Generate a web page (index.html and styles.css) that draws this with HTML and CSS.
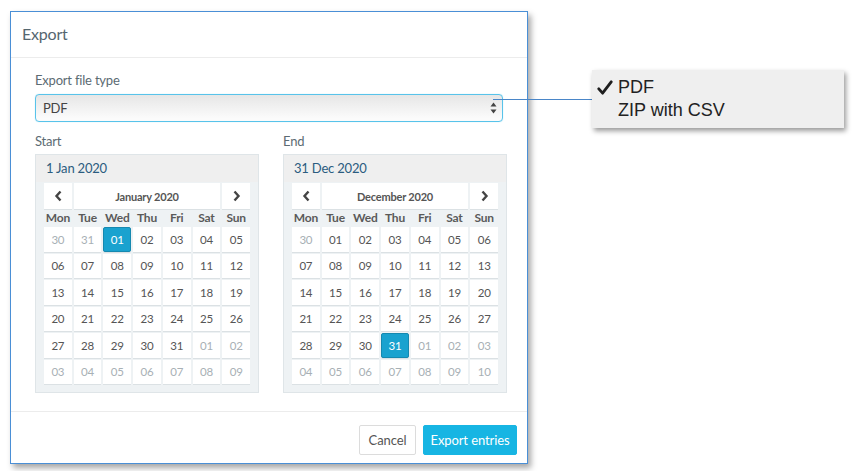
FILE: index.html
```html
<!DOCTYPE html>
<html>
<head>
<meta charset="utf-8">
<link rel="stylesheet" href="styles.css">
</head>
<body>
<div class="modal">
  <div class="modal-header">Export</div>
  <div class="modal-body">
    <div class="label">Export file type</div>
    <div class="select">
      <span>PDF</span>
      <svg class="arrows" width="7" height="12" viewBox="0 0 7 12"><path d="M3.5 0.5 L6.5 4.5 L0.5 4.5 Z M3.5 11.5 L6.5 7.5 L0.5 7.5 Z" fill="#444"/></svg>
    </div>
    <div class="cals">
      <div class="col">
        <div class="label lbl2">Start</div>
        <div class="cal">
          <div class="cal-head">1 Jan 2020</div>
          <div class="cal-body">
            <div class="nav">
              <div class="nbtn"><svg width="9" height="12" viewBox="0 0 9 12"><path d="M6.5 1.5 L2.5 6 L6.5 10.5" fill="none" stroke="#444" stroke-width="2.4"/></svg></div>
              <div class="month">January 2020</div>
              <div class="nbtn"><svg width="9" height="12" viewBox="0 0 9 12"><path d="M2.5 1.5 L6.5 6 L2.5 10.5" fill="none" stroke="#444" stroke-width="2.4"/></svg></div>
            </div>
            <div class="dows"><span>Mon</span><span>Tue</span><span>Wed</span><span>Thu</span><span>Fri</span><span>Sat</span><span>Sun</span></div>
            <div class="grid">
              <div class="d o">30</div><div class="d o">31</div><div class="d sel">01</div><div class="d">02</div><div class="d">03</div><div class="d">04</div><div class="d">05</div>
              <div class="d">06</div><div class="d">07</div><div class="d">08</div><div class="d">09</div><div class="d">10</div><div class="d">11</div><div class="d">12</div>
              <div class="d">13</div><div class="d">14</div><div class="d">15</div><div class="d">16</div><div class="d">17</div><div class="d">18</div><div class="d">19</div>
              <div class="d">20</div><div class="d">21</div><div class="d">22</div><div class="d">23</div><div class="d">24</div><div class="d">25</div><div class="d">26</div>
              <div class="d">27</div><div class="d">28</div><div class="d">29</div><div class="d">30</div><div class="d">31</div><div class="d o">01</div><div class="d o">02</div>
              <div class="d o">03</div><div class="d o">04</div><div class="d o">05</div><div class="d o">06</div><div class="d o">07</div><div class="d o">08</div><div class="d o">09</div>
            </div>
          </div>
        </div>
      </div>
      <div class="col">
        <div class="label lbl2">End</div>
        <div class="cal">
          <div class="cal-head">31 Dec 2020</div>
          <div class="cal-body">
            <div class="nav">
              <div class="nbtn"><svg width="9" height="12" viewBox="0 0 9 12"><path d="M6.5 1.5 L2.5 6 L6.5 10.5" fill="none" stroke="#444" stroke-width="2.4"/></svg></div>
              <div class="month">December 2020</div>
              <div class="nbtn"><svg width="9" height="12" viewBox="0 0 9 12"><path d="M2.5 1.5 L6.5 6 L2.5 10.5" fill="none" stroke="#444" stroke-width="2.4"/></svg></div>
            </div>
            <div class="dows"><span>Mon</span><span>Tue</span><span>Wed</span><span>Thu</span><span>Fri</span><span>Sat</span><span>Sun</span></div>
            <div class="grid">
              <div class="d o">30</div><div class="d">01</div><div class="d">02</div><div class="d">03</div><div class="d">04</div><div class="d">05</div><div class="d">06</div>
              <div class="d">07</div><div class="d">08</div><div class="d">09</div><div class="d">10</div><div class="d">11</div><div class="d">12</div><div class="d">13</div>
              <div class="d">14</div><div class="d">15</div><div class="d">16</div><div class="d">17</div><div class="d">18</div><div class="d">19</div><div class="d">20</div>
              <div class="d">21</div><div class="d">22</div><div class="d">23</div><div class="d">24</div><div class="d">25</div><div class="d">26</div><div class="d">27</div>
              <div class="d">28</div><div class="d">29</div><div class="d">30</div><div class="d sel">31</div><div class="d o">01</div><div class="d o">02</div><div class="d o">03</div>
              <div class="d o">04</div><div class="d o">05</div><div class="d o">06</div><div class="d o">07</div><div class="d o">08</div><div class="d o">09</div><div class="d o">10</div>
            </div>
          </div>
        </div>
      </div>
    </div>
  </div>
  <div class="modal-footer">
    <button class="btn cancel">Cancel</button>
    <button class="btn primary">Export entries</button>
  </div>
</div>
<div class="connector"></div>
<div class="menu">
  <div class="item"><svg class="check" width="16" height="16" viewBox="0 0 16 16"><path d="M1.8 8.8 L5.6 13.2 L14.2 1.8" fill="none" stroke="#1e1e1e" stroke-width="2.8" stroke-linecap="round" stroke-linejoin="round"/></svg><span>PDF</span></div>
  <div class="item"><span>ZIP with CSV</span></div>
</div>
</body>
</html>
```
FILE: styles.css
```css
* { box-sizing: border-box; }
html, body { margin: 0; padding: 0; background: #fff; }
body {
  font-family: Lato, "Liberation Sans", sans-serif;
  width: 860px;
  height: 471px;
  position: relative;
  overflow: hidden;
  padding-top: 11px;
  padding-left: 10px;
}
.modal {
  width: 518px;
  height: 453px;
  border: 1px solid #4a8fd6;
  background: #fff;
  box-shadow: 3px 4px 6px rgba(0,0,0,0.35);
  display: flex;
  flex-direction: column;
  letter-spacing: -0.2px;
}
.modal-header {
  height: 46px;
  border-bottom: 1px solid #ececec;
  padding-left: 11px;
  font-size: 16px;
  line-height: 44px;
  color: #55666f;
}
.modal-body {
  flex: 1;
  padding: 13px 24px 0 24px;
}
.label {
  font-size: 13px;
  line-height: 18px;
  color: #5c6b73;
}
.lbl2 { margin-top: 10px; margin-bottom: 4px; }
.select {
  margin-top: 5px;
  height: 28px;
  border: 1px solid #58c3ea;
  border-radius: 4px;
  background: linear-gradient(#e6e6e6, #fbfbfb 90%);
  display: flex;
  align-items: center;
  justify-content: space-between;
  padding: 0 5px 0 7px;
  font-size: 13px;
  color: #444;
  box-shadow: 0 0 1px #9bdcf2;
}
.arrows { display: block; }
.cals {
  display: grid;
  grid-template-columns: 224px 224px;
  column-gap: 24px;
}
.cal {
  border: 1px solid #dfe5e8;
  background: #eef2f4;
  height: 239px;
}
.cal-head {
  height: 27px;
  background: #efefef;
  padding-left: 10px;
  font-size: 13px;
  line-height: 27px;
  color: #2b5c80;
}
.cal-body { padding: 1px 8px 8px 8px; }
.nav {
  display: grid;
  grid-template-columns: 28px 1fr 28px;
  column-gap: 2px;
  height: 26px;
}
.nbtn, .month {
  background: #fff;
  box-shadow: 0 1px 0 #dbe1e4;
  display: flex;
  align-items: center;
  justify-content: center;
}
.month { font-size: 11px; font-weight: 700; color: #555; }
.dows {
  display: grid;
  grid-template-columns: repeat(7, 1fr);
  column-gap: 2px;
  height: 18px;
  line-height: 18px;
  text-align: center;
  font-size: 12px;
  font-weight: 700;
  color: #5a5a5a;
}
.grid {
  display: grid;
  grid-template-columns: repeat(7, 1fr);
  grid-auto-rows: 24.5px;
  gap: 2px;
}
.d {
  background: #fff;
  box-shadow: 0 1px 0 #dbe1e4;
  font-size: 11.5px;
  color: #555;
  display: flex;
  align-items: center;
  justify-content: center;
}
.d.o { color: #a8b0b5; }
.d.sel {
  background: #1aa2cf;
  border: 1px solid #1689b0;
  border-radius: 2px;
  color: #fff;
}
.modal-footer {
  height: 52px;
  border-top: 1px solid #ececec;
  display: flex;
  justify-content: flex-end;
  align-items: flex-start;
  gap: 7px;
  padding: 13px 10px 0 0;
}
.btn {
  height: 30px;
  padding: 0;
  white-space: nowrap;
  font-family: Lato, "Liberation Sans", sans-serif;
  font-size: 13px;
  letter-spacing: -0.1px;
  border-radius: 2px;
  cursor: pointer;
}
.cancel {
  width: 57px;
  background: #fff;
  border: 1px solid #dcdcdc;
  color: #555;
}
.primary {
  width: 94px;
  background: #17b5e3;
  border: 1px solid #17b5e3;
  color: #fff;
}
.connector {
  position: absolute;
  left: 493px;
  top: 99px;
  width: 99px;
  height: 1px;
  background: #4a86c8;
}
.menu {
  position: absolute;
  left: 592px;
  top: 70px;
  width: 252px;
  height: 58px;
  background: #efefef;
  box-shadow: 2px 3px 5px rgba(0,0,0,0.4);
  padding-top: 6px;
  font-family: "Liberation Sans", Arial, sans-serif;
  font-size: 18px;
  color: #222;
}
.item {
  height: 23px;
  display: flex;
  align-items: center;
  padding-left: 26px;
  position: relative;
}
.check {
  position: absolute;
  left: 5px;
  top: 4px;
}
```
